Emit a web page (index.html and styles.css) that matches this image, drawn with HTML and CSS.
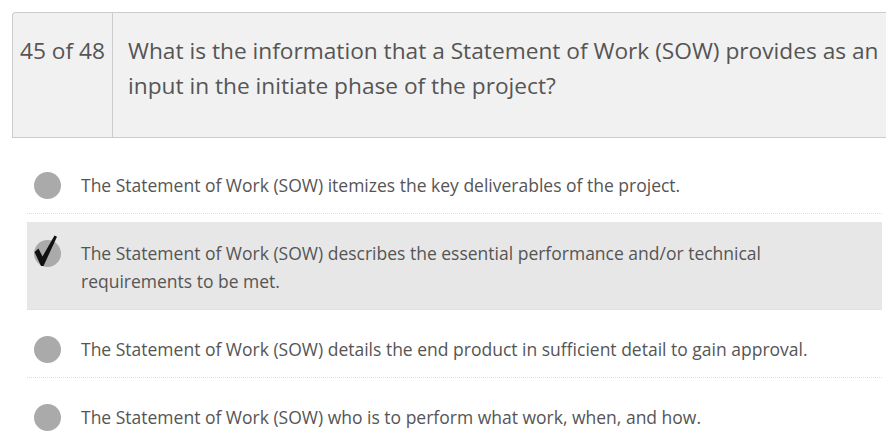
FILE: index.html
```html
<!DOCTYPE html>
<html lang="en">
<head>
  <meta charset="UTF-8" />
  <meta name="viewport" content="width=device-width, initial-scale=1" />
  <title>Quiz Question</title>
  <link rel="stylesheet" href="styles.css">
</head>
<body>

  <div class="quiz">
    <div class="question-head">
      <div class="q-count">45 of 48</div>
      <div class="q-text">What is the information that a Statement of Work (SOW) provides as an input in the initiate phase of the project?</div>
    </div>

    <ul class="answers">
      <li class="answer">
        <span class="dot"></span>
        <span class="answer-text">The Statement of Work (SOW) itemizes the key deliverables of the project.</span>
      </li>
      <li class="answer selected">
        <span class="dot">
          <svg class="check" viewBox="0 0 24 32" width="24" height="32">
            <path d="M0.5 17 L4.5 13.5 L8.5 21.5 L20.5 0.5 L23 1.8 L9.5 31 L7 31 Z" fill="#111"/>
          </svg>
        </span>
        <span class="answer-text">The Statement of Work (SOW) describes the essential performance and/or technical requirements to be met.</span>
      </li>
      <li class="answer">
        <span class="dot"></span>
        <span class="answer-text">The Statement of Work (SOW) details the end product in sufficient detail to gain approval.</span>
      </li>
      <li class="answer">
        <span class="dot"></span>
        <span class="answer-text">The Statement of Work (SOW) who is to perform what work, when, and how.</span>
      </li>
    </ul>
  </div>

</body>
</html>
```

FILE: styles.css
```css
body {
  margin: 0;
  padding: 12px 0 0 12px;
  background: #fff;
  font-family: "Open Sans", Arial, sans-serif;
  color: #555;
  overflow: hidden;
}

.quiz {
  width: 890px;
}

.question-head {
  display: flex;
  background: #f1f1f1;
  border: 1px solid #ccc;
  border-right: none;
  border-radius: 4px 0 0 0;
  font-size: 22.7px;
  line-height: 35px;
}

.q-count {
  width: 99px;
  flex-shrink: 0;
  text-align: center;
  padding: 20px 0 0;
  border-right: 1px solid #ccc;
  white-space: nowrap;
}

.q-text {
  padding: 20px 10px 34px 15px;
}

.answers {
  list-style: none;
  margin: 16px 0 0 15px;
  padding: 0;
  width: 855px;
}

.answer {
  display: flex;
  align-items: flex-start;
  padding: 17px 40px 14px 0;
  margin-bottom: 8px;
  border-bottom: 1px dotted #ddd;
  font-size: 17.5px;
  line-height: 28px;
}

.answer.selected {
  background: #e7e7e7;
}

.dot {
  position: relative;
  flex-shrink: 0;
  width: 27px;
  height: 27px;
  margin: 1px 20px 0 7px;
  border-radius: 50%;
  background: #aaa;
}

.check {
  position: absolute;
  left: 0;
  top: -5px;
}
```
